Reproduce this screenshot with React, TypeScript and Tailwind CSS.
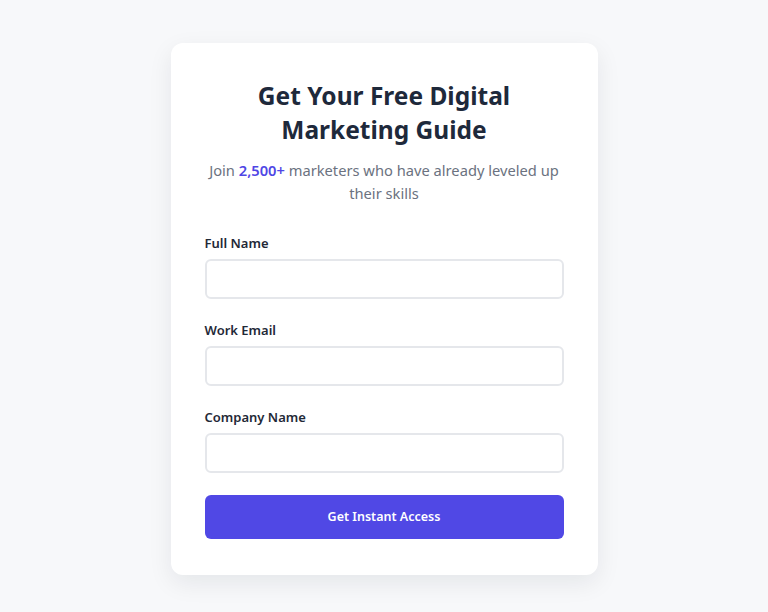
export default function App() {
  return (
    <div
      className="min-h-screen bg-[#f7f8fa] flex justify-center pt-[43px]"
      style={{ fontFamily: '"Noto Sans", "Open Sans", sans-serif' }}
    >
      <div className="w-[427px] h-[532px] bg-white rounded-xl shadow-[0_8px_24px_rgba(15,23,42,0.08)] px-[34px] pt-[36px] pb-[36px]">
        <h1 className="text-center text-[24.5px] leading-[34px] font-bold text-[#1e293b]">
          Get Your Free Digital
          <br />
          Marketing Guide
        </h1>
        <p className="mt-[12px] text-center text-[14.7px] leading-[23px] text-[#6b7280]">
          Join <span className="font-semibold text-[#4f46e5]">2,500+</span> marketers who have already leveled up
          their skills
        </p>

        <form className="mt-[28px]" onSubmit={(e) => e.preventDefault()}>
          <label className="block text-[13px] leading-[20px] font-semibold text-[#1f2937]">Full Name</label>
          <input
            type="text"
            className="mt-[6px] block w-full h-[40px] rounded-md border-2 border-[#e5e7eb] bg-white px-3 outline-none"
          />

          <label className="mt-[21px] block text-[13px] leading-[20px] font-semibold text-[#1f2937]">Work Email</label>
          <input
            type="email"
            className="mt-[6px] block w-full h-[40px] rounded-md border-2 border-[#e5e7eb] bg-white px-3 outline-none"
          />

          <label className="mt-[21px] block text-[13px] leading-[20px] font-semibold text-[#1f2937]">Company Name</label>
          <input
            type="text"
            className="mt-[6px] block w-full h-[40px] rounded-md border-2 border-[#e5e7eb] bg-white px-3 outline-none"
          />

          <button
            type="submit"
            className="mt-[22px] block w-full h-[44px] rounded-md bg-[#5048e5] text-white text-[12.5px] leading-[44px] font-semibold"
          >
            Get Instant Access
          </button>
        </form>
      </div>
    </div>
  )
}
